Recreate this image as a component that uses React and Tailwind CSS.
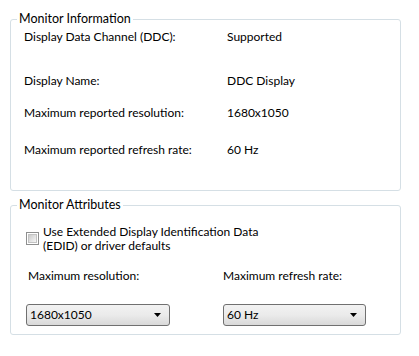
import { useState } from "react";

const font = { fontFamily: 'Lato, "Noto Sans", sans-serif' };

function GroupBox({ title, className, children }) {
  return (
    <div className={"relative rounded-[3px] border border-[#d5dfe5] " + className}>
      <span className="absolute left-[6px] top-[-9px] bg-white px-[2px] text-[12.5px] leading-[16px] text-[#000]">
        {title}
      </span>
      {children}
    </div>
  );
}

function Row({ label, value, className }) {
  return (
    <div className={"flex text-[12px] leading-[16px] " + className}>
      <span className="w-[203px]">{label}</span>
      <span>{value}</span>
    </div>
  );
}

function Combo({ value, className }) {
  return (
    <div
      className={
        "flex h-[22px] items-center justify-between rounded-[3px] border border-[#707070] bg-gradient-to-b from-[#f2f2f2] via-[#ebebeb] to-[#d9d9d9] pl-[3px] pr-[8px] text-[12px] " +
        className
      }
    >
      <span>{value}</span>
      <svg width="7" height="4" viewBox="0 0 7 4">
        <path d="M0 0h7L3.5 4z" fill="#000" />
      </svg>
    </div>
  );
}

export default function App() {
  const [edid, setEdid] = useState(false);
  return (
    <div className="h-[356px] w-[419px] bg-white text-black" style={font}>
      <div className="pl-[10px] pt-[19px]">
        <GroupBox title="Monitor Information" className="h-[172px] w-[391px] pl-[13px] pt-[9px]">
          <Row label="Display Data Channel (DDC):" value="Supported" />
          <Row label="Display Name:" value="DDC Display" className="mt-[28px]" />
          <Row label="Maximum reported resolution:" value="1680x1050" className="mt-[16px]" />
          <Row label="Maximum reported refresh rate:" value="60 Hz" className="mt-[21px]" />
        </GroupBox>

        <GroupBox title="Monitor Attributes" className="mt-[14px] h-[130px] w-[391px] pl-[15px] pt-[19px]">
          <label className="flex cursor-default items-start gap-[4px] text-[12px]">
            <span
              onClick={() => setEdid(!edid)}
              className="mt-[7px] flex h-[13px] w-[13px] shrink-0 items-center justify-center border border-[#8e8f8f] bg-white"
            >
              <span className="h-[9px] w-[9px] border border-[#c3c3c3] bg-gradient-to-br from-[#cbcbcb] to-[#f6f6f6]" />
            </span>
            <span className="leading-[14px]">
              Use Extended Display Identification Data
              <br />
              (EDID) or driver defaults
            </span>
          </label>

          <div className="mt-[15px] flex text-[12px] leading-[16px]">
            <span className="ml-[2px] w-[195px]">Maximum resolution:</span>
            <span>Maximum refresh rate:</span>
          </div>

          <div className="mt-[20px] flex">
            <Combo value="1680x1050" className="w-[144px]" />
            <Combo value="60 Hz" className="ml-[53px] w-[143px]" />
          </div>
        </GroupBox>
      </div>
    </div>
  );
}
